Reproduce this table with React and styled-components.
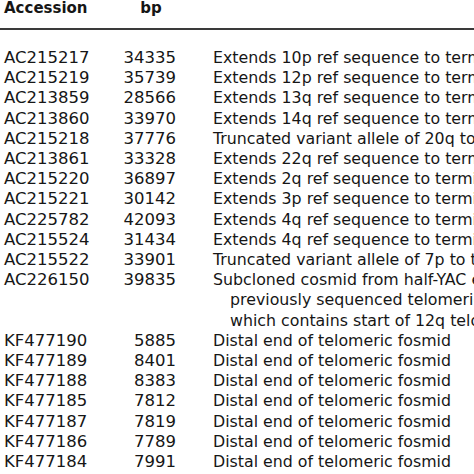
import React from 'react';
import styled, { createGlobalStyle } from 'styled-components';

const GlobalStyle = createGlobalStyle`
  html, body {
    margin: 0;
    padding: 0;
    background: #ffffff;
    overflow: hidden;
  }
`;

const rows = [
  { acc: 'AC215217', bp: '34335', desc: ['Extends 10p ref sequence to terminal repeats'] },
  { acc: 'AC215219', bp: '35739', desc: ['Extends 12p ref sequence to terminal repeats'] },
  { acc: 'AC213859', bp: '28566', desc: ['Extends 13q ref sequence to terminal repeats'] },
  { acc: 'AC213860', bp: '33970', desc: ['Extends 14q ref sequence to terminal repeats'] },
  { acc: 'AC215218', bp: '37776', desc: ['Truncated variant allele of 20q to terminal repeats'] },
  { acc: 'AC213861', bp: '33328', desc: ['Extends 22q ref sequence to terminal repeats'] },
  { acc: 'AC215220', bp: '36897', desc: ['Extends 2q ref sequence to terminal repeats'] },
  { acc: 'AC215221', bp: '30142', desc: ['Extends 3p ref sequence to terminal repeats'] },
  { acc: 'AC225782', bp: '42093', desc: ['Extends 4q ref sequence to terminal repeats'] },
  { acc: 'AC215524', bp: '31434', desc: ['Extends 4q ref sequence to terminal repeats'] },
  { acc: 'AC215522', bp: '33901', desc: ['Truncated variant allele of 7p to terminal repeats'] },
  {
    acc: 'AC226150',
    bp: '39835',
    desc: [
      'Subcloned cosmid from half-YAC extending',
      'previously sequenced telomeric clone',
      'which contains start of 12q telomere',
    ],
  },
  { acc: 'KF477190', bp: '5885', desc: ['Distal end of telomeric fosmid'] },
  { acc: 'KF477189', bp: '8401', desc: ['Distal end of telomeric fosmid'] },
  { acc: 'KF477188', bp: '8383', desc: ['Distal end of telomeric fosmid'] },
  { acc: 'KF477185', bp: '7812', desc: ['Distal end of telomeric fosmid'] },
  { acc: 'KF477187', bp: '7819', desc: ['Distal end of telomeric fosmid'] },
  { acc: 'KF477186', bp: '7789', desc: ['Distal end of telomeric fosmid'] },
  { acc: 'KF477184', bp: '7991', desc: ['Distal end of telomeric fosmid'] },
];

const App = () => {
  return (
    <>
      <GlobalStyle />
      <Table>
        <HeaderRow>
          <HeadCell>Accession</HeadCell>
          <HeadCell $center>bp</HeadCell>
          <HeadCell />
        </HeaderRow>
        <Rule />
        <Body>
          {rows.map((row) => (
            <Row key={row.acc}>
              <Cell>{row.acc}</Cell>
              <Cell $right>{row.bp}</Cell>
              <Desc>
                {row.desc.map((line, i) => (
                  <Line key={i} $indent={i > 0}>
                    {line}
                  </Line>
                ))}
              </Desc>
            </Row>
          ))}
        </Body>
      </Table>
    </>
  );
};

const Table = styled.div`
  width: 474px;
  height: 474px;
  overflow: hidden;
  font-family: 'DejaVu Sans', 'Open Sans', sans-serif;
  color: #161616;
  background: #ffffff;
`;

const grid = `
  display: grid;
  grid-template-columns: 110px 62px 1fr;
  padding-left: 4px;
  white-space: nowrap;
`;

const HeaderRow = styled.div`
  ${grid}
  height: 20px;
  font-size: 15px;
  line-height: 16px;
  font-weight: bold;
`;

const HeadCell = styled.div`
  text-align: ${(p) => (p.$center ? 'center' : 'left')};
  padding-left: ${(p) => (p.$center ? '12px' : '0')};
`;

const Rule = styled.div`
  height: 2px;
  margin-top: 8px;
  background: #3a3a3a;
`;

const Body = styled.div`
  padding-top: 18px;
`;

const Row = styled.div`
  ${grid}
  font-size: 16.5px;
  line-height: 20.2px;
`;

const Cell = styled.div`
  text-align: ${(p) => (p.$right ? 'right' : 'left')};
`;

const Desc = styled.div`
  min-width: 0;
  padding-left: 37px;
  font-size: 15.8px;
`;

const Line = styled.div`
  padding-left: ${(p) => (p.$indent ? '17px' : '0')};
`;

export default App;
